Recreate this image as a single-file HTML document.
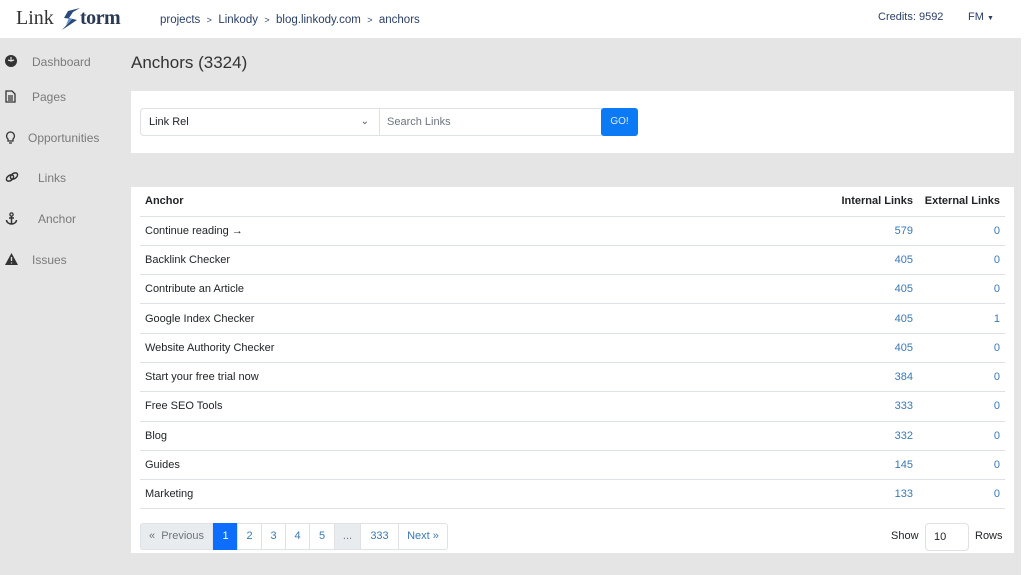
<!DOCTYPE html>
<html><head><meta charset="utf-8"><style>
*{box-sizing:border-box;margin:0;padding:0}
body{width:1024px;height:575px;overflow:hidden;background:#e5e5e5;font-family:"Liberation Sans",sans-serif;position:relative;color:#212529}
.abs{position:absolute}
#hdr{left:0;top:0;width:1024px;height:38px;background:#fff}
#rs{right:0;top:38px;width:3px;height:537px;background:#fff}
.side{left:0;font-size:12px;color:#7a7a7a;height:16px;line-height:16px}
.side svg{position:absolute;left:5px;top:1px}
.card{background:#fff;left:131px;width:883px}
table{border-collapse:collapse;position:absolute;left:140px;top:187px;width:865px;font-size:11px}
td,th{height:29.3px;border-bottom:1px solid #dee2e6;padding:0 5px;text-align:left}
th{font-weight:bold;height:29px}
.n{text-align:right;color:#3a78b5}
td.i,th.i{padding-right:0}
.pg{position:absolute;top:523px;height:27px;border:1px solid #dee2e6;font-size:11px;line-height:25px;text-align:center;color:#3a78b5;background:#fff}
</style></head><body>
<div id="hdr" class="abs">
 <div class="abs" style="left:16px;top:7px;font-family:'Liberation Serif',serif;font-size:20px;color:#333">Link</div>
 <svg class="abs" style="left:60px;top:7px" width="22" height="24" viewBox="0 0 22 24"><path d="M20 1 L8 4 L4 11 L12 12 L2 23 L17 13 L9 11 L13 5 Z" fill="#2a4a7a"/><path d="M9 11 L12 12 L6 18Z" fill="#5b8fd6"/></svg>
 <div class="abs" style="left:80px;top:7px;font-family:'Liberation Serif',serif;font-size:20px;color:#2a3a55;font-weight:bold;letter-spacing:-0.5px">torm</div>
 <div class="abs" style="left:160px;top:14px;font-size:11.5px;color:#2a3f66">projects &nbsp;<span style="font-size:9px">&gt;</span>&nbsp; Linkody &nbsp;<span style="font-size:9px">&gt;</span>&nbsp; blog.linkody.com &nbsp;<span style="font-size:9px">&gt;</span>&nbsp; anchors</div>
 <div class="abs" style="left:878px;top:11px;font-size:11px;color:#2a3f66">Credits: 9592</div>
 <div class="abs" style="left:968px;top:11px;font-size:11px;color:#2a3f66">FM <span style="font-size:7px">▼</span></div>
</div>
<div id="rs" class="abs"></div>

<div class="abs side" style="top:54px"><svg width="12" height="12" viewBox="0 0 12 12"><circle cx="6" cy="6" r="6" fill="#333"/><path d="M6 2v4M3 5l3 1 3-1" stroke="#e5e5e5" stroke-width="1.2" fill="none"/></svg><span style="position:absolute;left:32px">Dashboard</span></div>
<div class="abs side" style="top:89px"><svg width="11" height="13" viewBox="0 0 11 13"><path d="M1 1h6l3 3v8H1z M3 6h5M3 8h5M3 10h5" stroke="#333" stroke-width="1.3" fill="none"/></svg><span style="position:absolute;left:32px">Pages</span></div>
<div class="abs side" style="top:130px"><svg width="11" height="13" viewBox="0 0 11 13"><path d="M5.5 1a4 4 0 0 0-2.5 7v2h5V8a4 4 0 0 0-2.5-7zM4 12h3" stroke="#333" stroke-width="1.3" fill="none"/></svg><span style="position:absolute;left:28px">Opportunities</span></div>
<div class="abs side" style="top:170px"><svg width="14" height="12" viewBox="0 0 14 12"><ellipse cx="5" cy="7" rx="4" ry="2.6" transform="rotate(-35 5 7)" stroke="#333" stroke-width="1.4" fill="none"/><ellipse cx="9" cy="5" rx="4" ry="2.6" transform="rotate(-35 9 5)" stroke="#333" stroke-width="1.4" fill="none"/></svg><span style="position:absolute;left:38px">Links</span></div>
<div class="abs side" style="top:211px"><svg width="13" height="13" viewBox="0 0 13 13"><circle cx="6.5" cy="2.5" r="1.6" stroke="#333" stroke-width="1.3" fill="none"/><path d="M6.5 4v8M4 6h5M1.5 8a5 4 0 0 0 10 0" stroke="#333" stroke-width="1.5" fill="none"/></svg><span style="position:absolute;left:38px">Anchor</span></div>
<div class="abs side" style="top:252px"><svg width="13" height="12" viewBox="0 0 13 12"><path d="M6.5 0L13 12H0z" fill="#333"/><path d="M6.5 4v4M6.5 9.5v1" stroke="#e5e5e5" stroke-width="1.3"/></svg><span style="position:absolute;left:32px">Issues</span></div>

<div class="abs" style="left:131px;top:53px;font-size:17px;color:#333">Anchors (3324)</div>
<div class="abs card" style="top:91px;height:62px"></div>
<div class="abs" style="left:140px;top:108px;width:240px;height:28px;border:1px solid #dee2e6;border-radius:4px 0 0 4px;font-size:11px;line-height:26px;padding-left:8px">Link Rel<span style="position:absolute;right:10px;top:0;font-size:10px;color:#555">⌄</span></div>
<div class="abs" style="left:379px;top:108px;width:223px;height:28px;border:1px solid #dee2e6;border-left:none;font-size:11px;line-height:26px;padding-left:8px;color:#6c757d">Search Links</div>
<div class="abs" style="left:601px;top:108px;width:37px;height:28px;background:#0d7af5;border-radius:3px;font-size:10px;line-height:28px;text-align:center;color:#dfe9f7">GO!</div>

<div class="abs card" style="top:187px;height:366px"></div>
<table>
<tr><th>Anchor</th><th class="i" style="text-align:right;width:120px">Internal Links</th><th style="text-align:right;width:92px">External Links</th></tr>
<tr><td>Continue reading →</td><td class="n i">579</td><td class="n">0</td></tr>
<tr><td>Backlink Checker</td><td class="n i">405</td><td class="n">0</td></tr>
<tr><td>Contribute an Article</td><td class="n i">405</td><td class="n">0</td></tr>
<tr><td>Google Index Checker</td><td class="n i">405</td><td class="n">1</td></tr>
<tr><td>Website Authority Checker</td><td class="n i">405</td><td class="n">0</td></tr>
<tr><td>Start your free trial now</td><td class="n i">384</td><td class="n">0</td></tr>
<tr><td>Free SEO Tools</td><td class="n i">333</td><td class="n">0</td></tr>
<tr><td>Blog</td><td class="n i">332</td><td class="n">0</td></tr>
<tr><td>Guides</td><td class="n i">145</td><td class="n">0</td></tr>
<tr><td>Marketing</td><td class="n i">133</td><td class="n">0</td></tr>
</table>

<div class="pg" style="left:140px;width:73px;background:#e9ecef;color:#6c757d;border-radius:3px 0 0 3px">« &nbsp;Previous</div>
<div class="pg" style="left:213px;width:25px;background:#0d6efd;color:#fff;border-color:#0d6efd">1</div>
<div class="pg" style="left:237px;width:25px">2</div>
<div class="pg" style="left:261px;width:25px">3</div>
<div class="pg" style="left:285px;width:25px">4</div>
<div class="pg" style="left:309px;width:26px">5</div>
<div class="pg" style="left:334px;width:27px;background:#e9ecef;color:#6c757d">...</div>
<div class="pg" style="left:360px;width:39px">333</div>
<div class="pg" style="left:398px;width:50px;border-radius:0 3px 3px 0">Next »</div>

<div class="abs" style="left:891px;top:530px;font-size:11px">Show</div>
<div class="abs" style="left:925px;top:523px;width:44px;height:28px;border:1px solid #dee2e6;border-radius:4px;font-size:11px;line-height:26px;padding-left:8px">10</div>
<div class="abs" style="left:975px;top:530px;font-size:11px">Rows</div>
</body></html>
